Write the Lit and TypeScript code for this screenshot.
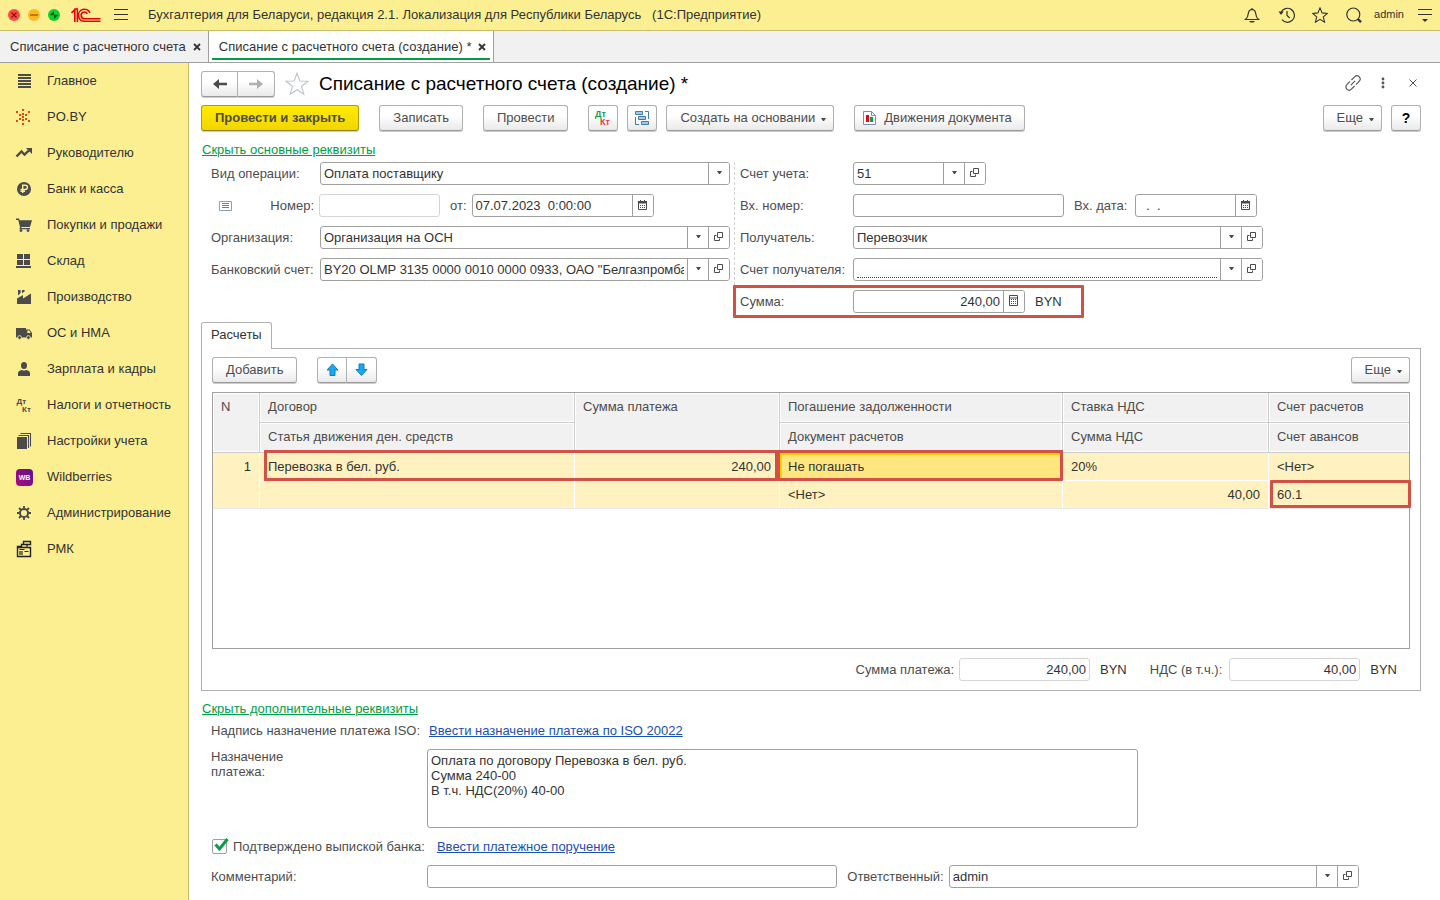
import { LitElement, html, css, nothing, TemplateResult } from "lit";
import { customElement, property } from "lit/decorators.js";
import { classMap } from "lit/directives/class-map.js";

const icons: Record<string, TemplateResult> = {
  main: html`<svg width="18" height="18" viewBox="0 0 18 18" fill="#4b4b4b"><path d="M3 2h13v2H3zM3 5h13v2H3zM3 8h13v2H3zM3 11h13v2H3zM3 14h13v2H3z"/></svg>`,
  poby: html`<svg width="18" height="18" viewBox="0 0 18 18" fill="#e8450a"><path d="M7 1h2v2H7zM7 15h2v2H7zM1 3h2v2H1zM13 3h2v2h-2zM1 12h2v2H1zM13 12h2v2h-2zM7 5h2v2H7zM7 8h2v2H7zM7 11h2v2H7zM4 6h2v2H4zM10 6h2v2h-2zM4 10h2v2H4zM10 10h2v2h-2z"/></svg>`,
  trend: html`<svg width="18" height="18" viewBox="0 0 18 18"><path d="M1.5 12.5L6.5 7.5L9.5 10.5L14.5 5.8" fill="none" stroke="#4b4b4b" stroke-width="2.4"/><path d="M11 4h6v6z" fill="#4b4b4b"/></svg>`,
  ruble: html`<svg width="18" height="18" viewBox="0 0 18 18"><circle cx="9" cy="9" r="7" fill="#4b4b4b"/><path d="M7.7 13V5.2h2.6a2.1 2.1 0 0 1 0 4.3H5.5M5.5 11.3H10" fill="none" stroke="#fbef92" stroke-width="1.4"/></svg>`,
  cart: html`<svg width="18" height="18" viewBox="0 0 18 18" fill="#4b4b4b"><path d="M1 2.5h3l.6 1.8H17l-2 6.7H6.5l-.4 1H15v1.2H4.4L5 11 3.2 4H1z"/><circle cx="6" cy="14.6" r="1.4"/><circle cx="13" cy="14.6" r="1.4"/></svg>`,
  stock: html`<svg width="18" height="18" viewBox="0 0 18 18" fill="#4b4b4b"><path d="M2 2h6v5H2zM9 2h6v5H9zM2 8h6v5H2zM9 8h6v5H9zM1 14h15v2H1z"/></svg>`,
  factory: html`<svg width="18" height="18" viewBox="0 0 18 18" fill="#4b4b4b"><path d="M2 16V10.5L8 7v3.5L16 5.5V16zM3 2h2.6v3L3 7.5zM7 2h2.6v1.5L7 5.2z"/></svg>`,
  truck: html`<svg width="18" height="18" viewBox="0 0 18 18"><path d="M1 4h10v1.5h3.6L17 9v4.5H1z" fill="#4b4b4b"/><path d="M12.3 6.6h1.9L15.7 9h-3.4z" fill="#fbef92"/><circle cx="4.6" cy="13.5" r="1.9" fill="#4b4b4b" stroke="#fbef92" stroke-width=".8"/><circle cx="13.4" cy="13.5" r="1.9" fill="#4b4b4b" stroke="#fbef92" stroke-width=".8"/></svg>`,
  person: html`<svg width="18" height="18" viewBox="0 0 18 18" fill="#4b4b4b"><ellipse cx="9" cy="5.4" rx="3" ry="3.5"/><path d="M3 16v-3c0-1.6 1.6-2.6 4-3l2 .8 2-.8c2.4.4 4 1.4 4 3v3z"/></svg>`,
  dtkt: html`<svg width="18" height="18" viewBox="0 0 18 18" fill="#4b4b4b" font-family="Liberation Sans, sans-serif" font-size="8" font-weight="bold"><text x="1.5" y="8">Дт</text><text x="7" y="15.5">Кт</text></svg>`,
  books: html`<svg width="18" height="18" viewBox="0 0 18 18"><path d="M2 5h10v12H2z" fill="#4b4b4b"/><path d="M3.5 3.5H13.5V16M5.5 1.5h10V14.5" fill="none" stroke="#4b4b4b" stroke-width="1.1"/></svg>`,
  wb: html`<svg width="18" height="18" viewBox="0 0 18 18"><defs><linearGradient id="wbg" x1="0" y1="1" x2="1" y2="0"><stop offset="0" stop-color="#b0087e"/><stop offset="1" stop-color="#5a1390"/></linearGradient></defs><rect x="1" y="1" width="17" height="17" rx="4" fill="url(#wbg)"/><text x="9.5" y="12" text-anchor="middle" font-family="Liberation Sans, sans-serif" font-size="7" font-weight="bold" fill="#fff">WB</text></svg>`,
  gear: html`<svg width="18" height="18" viewBox="0 0 18 18"><circle cx="9" cy="9" r="4.1" fill="none" stroke="#4b4b4b" stroke-width="2"/><path d="M9 2v3M9 13v3M2 9h3M13 9h3M4 4l2 2M12 12l2 2M4 14l2-2M12 6l2-2" stroke="#4b4b4b" stroke-width="1.8"/></svg>`,
  pos: html`<svg width="18" height="18" viewBox="0 0 18 18"><path d="M8.5 1.5h7v3h-7zM12 4.5v2M2.5 9V6.5h4V4.5h2M2.5 7.5h13v9h-13z" fill="none" stroke="#222" stroke-width="1.4"/><path d="M4.5 9.5h5M5 11v4M7 11v4M9.5 11.5h4" stroke="#222" stroke-width="1.2"/></svg>`,

  close: html`<svg width="12" height="12" viewBox="0 0 12 12"><circle cx="6" cy="6" r="6" fill="#fc4a44"/><path d="M3.5 3.5l5 5M8.5 3.5l-5 5" stroke="#8c1410" stroke-width="1.2"/></svg>`,
  min: html`<svg width="12" height="12" viewBox="0 0 12 12"><circle cx="6" cy="6" r="6" fill="#fdb823"/><path d="M2 6h8" stroke="#b56a00" stroke-width="1.6"/></svg>`,
  max: html`<svg width="12" height="12" viewBox="0 0 12 12"><circle cx="6" cy="6" r="6" fill="#0fd02e"/><path d="M1.5 6.2L6 2v4.2zM10.5 5.8L6 10V5.8z" fill="#0a5c17"/></svg>`,
  logo: html`<svg width="30" height="15" viewBox="0 0 30 15" fill="none" stroke="#e3000f" stroke-width="1.6"><path d="M.5 5L3.8 1.7V14M3.2 1H6.4V14"/><path d="M18.9 4.8A6 6 0 1 0 13.5 13.3H29.5"/><path d="M16.3 5.8A3.3 3.3 0 1 0 13.5 10.7H29.5"/></svg>`,
  burger: html`<svg width="14" height="12" viewBox="0 0 14 12"><path d="M0 .5h14M0 5.5h14M0 10.5h14" stroke="#333" stroke-width="1"/></svg>`,
  bell: html`<svg width="16" height="16" viewBox="0 0 16 16"><path d="M1.5 12.5C3.5 11 4 9.5 4.3 6.5C4.6 4 5.5 2.7 8 2.4C10.5 2.7 11.4 4 11.7 6.5C12 9.5 12.5 11 14.5 12.5zM8 2.4V1" fill="none" stroke="#333" stroke-width="1.2"/><path d="M5 14h6l-1.500 1.600h-3z" fill="#333"/></svg>`,
  history: html`<svg width="17" height="16" viewBox="0 0 17 16"><path d="M3 5.5A7 7 0 1 1 4 12.7" fill="none" stroke="#333" stroke-width="1.2"/><path d="M.5 4.5h5.2L3 8z" fill="#333"/><path d="M9 4v4.5l2.8 2.5" fill="none" stroke="#333" stroke-width="1.2"/></svg>`,
  star: html`<svg width="16" height="16" viewBox="0 0 16 16"><path d="M8 .9l2.1 5 5.2.5-4 3.5 1.3 5.3L8 12.4l-4.6 2.8 1.3-5.3-4-3.5 5.2-.5z" fill="none" stroke="#333" stroke-width="1.1"/></svg>`,
  search: html`<svg width="16" height="16" viewBox="0 0 16 16"><circle cx="7.3" cy="7.5" r="6.5" fill="none" stroke="#333" stroke-width="1.2"/><path d="M11.8 12l3.2 3.2" stroke="#333" stroke-width="2.4"/></svg>`,
  service: html`<svg width="14" height="14" viewBox="0 0 14 14"><path d="M0 1.5h14M0 6.5h14" stroke="#333" stroke-width="1"/><path d="M4 11h6L7 14z" fill="#333"/></svg>`,
  cross: html`<svg width="8" height="8" viewBox="0 0 8 8"><path d="M1 1l6 6M7 1L1 7" stroke="#333" stroke-width="1.8"/></svg>`,
  thinCross: html`<svg width="8" height="8" viewBox="0 0 8 8"><path d="M.5.5l7 7M7.5.5l-7 7" stroke="#555" stroke-width="1"/></svg>`,
  dots: html`<svg width="4" height="12" viewBox="0 0 4 12" fill="#555"><circle cx="2" cy="2" r="1.4"/><circle cx="2" cy="6" r="1.4"/><circle cx="2" cy="10" r="1.4"/></svg>`,
  link: html`<svg width="16" height="16" viewBox="0 0 16 16" fill="none" stroke="#555" stroke-width="1.2"><g transform="rotate(-45 8 8)"><path d="M7 4.8H2.5a3.2 3.2 0 0 0 0 6.4H7M9 4.8h4.5a3.2 3.2 0 0 1 0 6.4H9M5 8h6"/></g></svg>`,
  back: html`<svg width="14" height="12" viewBox="0 0 14 12"><path d="M0 6l6-5v3.7h8v2.6H6V11z" fill="#4b4b4b"/></svg>`,
  forward: html`<svg width="14" height="12" viewBox="0 0 14 12"><path d="M14 6L8 1v3.7H0v2.6h8V11z" fill="#b0b0b0"/></svg>`,
  favorite: html`<svg width="24" height="24" viewBox="0 0 24 24"><path d="M12 1.3l2.9 7.7 8 .3-6.3 5 2.2 7.9-6.800-4.500-6.800 4.500 2.200-7.900-6.300-5 8-.3z" fill="none" stroke="#bcc4cc" stroke-width="1.1"/></svg>`,
  dtktColor: html`<svg width="18" height="18" viewBox="0 0 18 18" font-family="Liberation Sans, sans-serif" font-size="9" font-weight="bold"><text x="1" y="8" fill="#139a4b">Дт</text><text x="6" y="16" fill="#ee3338">Кт</text></svg>`,
  tree: html`<svg width="16" height="16" viewBox="0 0 16 16"><g fill="#a9c8e2" stroke="#3f7cac" stroke-width="1"><path d="M1.5 1.5h7v3h-7zM4.5 6.5h7v3h-7zM7.5 11.5h7v3h-7z"/></g><path d="M11 1.5h3.5V9M1.5 7v7.5H5" fill="none" stroke="#3f7cac" stroke-width="1"/></svg>`,
  report: html`<svg width="13" height="14" viewBox="0 0 13 14"><path d="M.5.5h8l4 4v9H.5z" fill="#fff" stroke="#7b8fa6"/><path d="M8.5.5v4h4" fill="none" stroke="#7b8fa6"/><path d="M3 4h3v7H3z" fill="#e30613"/><path d="M7 6h3v5H7z" fill="#139a4b"/></svg>`,
  arrow: html`<svg width="5" height="3" viewBox="0 0 5 3"><path d="M0 0h5L3 3H2z" fill="#4b4b4b"/></svg>`,
  open: html`<svg width="10" height="10" viewBox="0 0 10 10" fill="none" stroke="#4b4b4b" stroke-width="1"><path d="M3.5.5h5v5h-5zM2.5 3.5h-2v5h5v-2"/></svg>`,
  calendar: html`<svg width="10" height="10" viewBox="0 0 10 10"><path d="M.5 1.5h8v8h-8z" fill="none" stroke="#4b4b4b"/><path d="M0 1h9v2.500H0zM2 0h1v1H2zM6 0h1v1H6z" fill="#4b4b4b"/><path d="M2 5.5h5.5M2 7.5h5.5" stroke="#4b4b4b" stroke-dasharray="1 1"/></svg>`,
  calc: html`<svg width="10" height="11" viewBox="0 0 10 11"><path d="M.5.5h8v10h-8zM.5 3h8" fill="none" stroke="#4b4b4b"/><path d="M2 4.5h5.5M2 6.5h5.5M2 8.5h5.5" stroke="#4b4b4b" stroke-dasharray="1 1"/></svg>`,
  list: html`<svg width="13" height="10" viewBox="0 0 13 10"><path d="M.5.5h12v9H.5z" fill="#fff" stroke="#8ba0b8"/><path d="M3 2.5h7M3 4.5h7M3 6.5h7" stroke="#6d7f94" stroke-width="1"/></svg>`,
  up: html`<svg width="13" height="14" viewBox="0 0 13 14"><path d="M6.5 1l5.5 6H9v5.5H4V7H1z" fill="#14aaf5" stroke="#1c79b0" stroke-width="1"/></svg>`,
  down: html`<svg width="13" height="14" viewBox="0 0 13 14"><path d="M6.5 12.5l5.5-6H9V1H4v5.5H1z" fill="#14aaf5" stroke="#1c79b0" stroke-width="1"/></svg>`,
  check: html`<svg width="17" height="16" viewBox="0 0 17 16"><path d="M3.5 6.5l4 4.5L15.5 1" fill="none" stroke="#0a9c46" stroke-width="3"/></svg>`,
};

const toolTitles: Record<string, string> = { arrow: "Выбрать", open: "Открыть", calendar: "Календарь", calc: "Калькулятор" };

/** Text box with the small command buttons that sit inside its frame. */
@customElement("entry-field")
class EntryField extends LitElement {
  @property() label = "";
  @property() value = "";
  @property() tools = "";
  @property({ type: Boolean }) select = false;
  @property({ type: Boolean, reflect: true }) muted = false;
  @property({ type: Boolean }) required = false;
  @property({ type: Boolean }) numeric = false;

  static styles = css`
    :host { display: block; min-width: 0; }
    .frame {
      display: flex; box-sizing: border-box; height: 23px; width: 100%;
      border: 1px solid #a0a0a0; border-radius: 3px; background: #fff; overflow: hidden;
    }
    :host([muted]) .frame { border-color: #d5d5d5; }
    .slot { flex: 1; min-width: 0; display: flex; padding: 0 3px; }
    .text {
      flex: 1; min-width: 0; width: 100%; border: 0; outline: 0; padding: 0; margin: 0; background: none;
      font: 13px "Liberation Sans", Arial, sans-serif; color: #333; appearance: none;
    }
    .required { margin-bottom: 2px; border-bottom: 1px dotted #e00000; }
    .numeric { text-align: right; }
    .tool {
      box-sizing: border-box; width: 21px; flex: none; padding: 0 0 2px; border: 0; border-left: 1px solid #a0a0a0;
      background: #fff; display: flex; align-items: center; justify-content: center;
    }
    svg { display: block; }
  `;

  render() {
    const cls = classMap({ text: true, required: this.required, numeric: this.numeric });
    return html`<div class="frame">
      <div class="slot">
        ${this.select
          ? html`<select class=${cls} aria-label=${this.label}><option>${this.value}</option></select>`
          : html`<input class=${cls} aria-label=${this.label} .value=${this.value} ?readonly=${this.muted} />`}
      </div>
      ${this.tools
        ? this.tools.split(" ").map((t) => html`<button class="tool" aria-label=${toolTitles[t]}>${icons[t]}</button>`)
        : nothing}
    </div>`;
  }
}

const sections: [string, string][] = [
  ["main", "Главное"],
  ["poby", "PO.BY"],
  ["trend", "Руководителю"],
  ["ruble", "Банк и касса"],
  ["cart", "Покупки и продажи"],
  ["stock", "Склад"],
  ["factory", "Производство"],
  ["truck", "ОС и НМА"],
  ["person", "Зарплата и кадры"],
  ["dtkt", "Налоги и отчетность"],
  ["books", "Настройки учета"],
  ["wb", "Wildberries"],
  ["gear", "Администрирование"],
  ["pos", "РМК"],
];

@customElement("app-root")
class AppRoot extends LitElement {
  static styles = css`
    :host {
      display: flex; flex-direction: column; min-height: 100vh; box-sizing: border-box;
      font: 13px/15px "Liberation Sans", Arial, sans-serif; color: #4d4d4d; background: #fff;
    }
    * { box-sizing: border-box; }
    svg { display: block; flex: none; }
    button { font: inherit; color: inherit; margin: 0; }
    a { color: inherit; }
    .plain { border: 0; background: none; padding: 0; display: flex; align-items: center; justify-content: center; }

    .top { display: flex; align-items: center; height: 31px; padding: 0 7px 0 8px; background: #fbef92; border-bottom: 1px solid #c5bd6a; color: #333; }
    .lights { display: flex; gap: 8px; }
    .top .logo { margin-left: 11px; }
    .top .burger { margin-left: 13px; }
    .caption { margin-left: 20px; padding-bottom: 2px; white-space: pre; }
    .tray { margin-left: auto; display: flex; align-items: center; gap: 18px; }
    .tray .plain { width: 16px; }
    .user { font-size: 11px; margin: 0 -5px 0 -6px; padding-bottom: 2px; color: #333; text-decoration: none; }

    .tabs { display: flex; height: 32px; background: #f1f1f1; border-bottom: 1px solid #a0a0a0; color: #333; }
    .tab { display: flex; align-items: center; gap: 7px; padding: 0 7px 0 10px; border-right: 1px solid #a0a0a0; position: relative; }
    .tab.current { background: #fff; }
    .tab.current::after { content: ""; position: absolute; left: 3px; right: 3px; bottom: 2px; height: 2px; background: #009e47; }
    .tab a { text-decoration: none; }

    .body { flex: 1; display: flex; }
    .side { width: 189px; flex: none; background: #fbef92; border-right: 1px solid #c5bd6a; }
    .side a { display: flex; align-items: center; gap: 14px; height: 36px; padding-left: 15px; color: #333; text-decoration: none; }
    .side span { padding-bottom: 2px; }

    .main { flex: 1; min-width: 0; display: flex; flex-direction: column; padding: 8px 19px 12px 12px; }
    .head { display: flex; align-items: center; height: 26px; }
    .head h1 { margin: 0 0 0 10px; font-weight: normal; font-size: 19px; line-height: 22px; color: #000; }
    .head .fav { margin-left: 10px; }
    .head .right { margin-left: auto; display: flex; align-items: center; gap: 14px; padding-bottom: 2px; }
    .head .right .plain { width: 16px; }
    .pair { display: flex; }
    .btn {
      display: flex; align-items: center; justify-content: center; gap: 6px; height: 26px; padding: 0 13px 1px;
      border: 1px solid #b0b0b0; border-bottom-color: #9a9a9a; border-radius: 3px;
      background: linear-gradient(#fff 40%, #e9e9e9); box-shadow: 0 1px 0 #ccc; white-space: nowrap;
    }
    .btn.more { padding-right: 7px; }
    .btn.more svg { margin-top: 4px; }
    .btn.icon { width: 30px; padding: 0; }
    .btn.report { padding-left: 8px; padding-right: 12px; gap: 8px; }
    .btn.help { width: 30px; padding: 0; font-weight: bold; font-size: 14px; color: #000; }
    .btn.primary { background: linear-gradient(#ffec00, #f2d500); border-color: #b39c00; border-bottom-color: #958200; font-weight: bold; }
    .pair .btn { width: 37px; padding: 0; }
    .pair .btn:first-child { border-radius: 3px 0 0 3px; }
    .pair .btn:last-child { border-left: 0; border-radius: 0 3px 3px 0; }
    .pair.small .btn { width: 30px; }
    .commands { display: flex; gap: 20px; margin-top: 8px; }
    .commands .group { display: flex; gap: 9px; }
    .commands .end { margin-left: auto; }
    .toggle { align-self: flex-start; margin: 11px 0 0 1px; color: #009e47; }
    .panel + .toggle { margin-top: 10px; }

    .form { display: flex; margin-top: 5px; padding: 0 158px 0 10px; }
    .col { display: flex; flex-direction: column; gap: 9px; min-width: 0; }
    .col.one { flex: 1 1 109px; }
    .col.two { flex: 1 1 113px; }
    .split { width: 10px; flex: none; padding-left: 4px; height: 123px; }
    .split::before { content: ""; display: block; height: 100%; border-left: 1px dashed #d0d0d0; }
    .row { display: flex; align-items: center; height: 23px; position: relative; }
    .row label { white-space: nowrap; }
    .one .row > label:first-child { width: 109px; flex: none; }
    .one .row > .lead { width: 108px; flex: none; }
    .two .row > label:first-child { width: 113px; flex: none; }
    .lead { display: flex; align-items: center; justify-content: space-between; padding: 0 5px 0 8px; }
    .grow { flex: 1; }
    .w121 { width: 121px; } .w131 { width: 131px; } .w133 { width: 133px; } .w172 { width: 172px; }
    .w182 { width: 182px; } .w211 { width: 211px; } .w122 { width: 122px; }
    .next { margin: 0 5px 0 10px; }
    .next.wide { min-width: 56px; }
    .unit { margin-left: 10px; color: #333; }
    .marked::after { content: ""; position: absolute; border: 3px solid #d25045; border-radius: 1px; pointer-events: none; z-index: 1; }
    .row.marked { align-self: flex-start; }
    .row.marked::after { inset: -5px -22px -5px -7px; }

    .strip { display: flex; margin-top: 9px; margin-bottom: -1px; }
    .page { height: 27px; padding: 0 9px 3px; border: 1px solid #b0b0b0; border-bottom: 0; border-radius: 3px 3px 0 0; background: #fff; color: #333; position: relative; z-index: 1; }
    .panel { flex: 1; display: flex; flex-direction: column; border: 1px solid #b0b0b0; padding: 8px 10px 9px; }
    .bar { display: flex; gap: 20px; }
    .bar .end { margin-left: auto; }
    .sheet { flex: 1; min-height: 120px; margin-top: 9px; border: 1px solid #a0a0a0; }
    table { width: 100%; table-layout: fixed; border-collapse: separate; border-spacing: 0; }
    th, td { text-align: left; font-weight: normal; vertical-align: top; padding: 6px 8px 0; white-space: nowrap; position: relative; }
    th { height: 30px; background: #f1f1f1; border-right: 1px solid #ccc; border-bottom: 1px solid #ccc; box-shadow: inset 0 0 0 1px #fff; }
    th.edge { border-right: 0; }
    td { height: 28px; background: #fff2c0; color: #333; border-right: 1px solid #fff; border-bottom: 1px solid #fff; }
    td.edge { border-right: 0; }
    tr:last-child td, td[rowspan] { border-bottom-color: #e8e8e8; }
    .num { text-align: right; padding-right: 8px; }
    td.active { background: #ffe680; box-shadow: inset 0 0 0 2px #ffcc00; }
    .from::after { inset: -3px -1px -1px 4px; border-right: 0; }
    .to::after { inset: -3px 1px -1px -1px; border-left: 0; }
    .whole::after { inset: -3px -1px -1px -3px; }
    .last::after { inset: -1px -2px 0 1px; }
    .totals { display: flex; justify-content: flex-end; align-items: center; margin-top: 9px; padding-right: 13px; }
    .totals label { margin-right: 5px; }
    .totals .second { margin: 0 7px 0 23px; }

    .blue { color: #1a4fb5; }
    .line { display: flex; align-items: center; }
    .iso { margin: 7px 0 0 10px; gap: 9px; }
    .purpose { display: flex; margin: 11px 0 0 10px; }
    .purpose label { width: 216px; padding-right: 120px; flex: none; }
    textarea {
      flex: 0 1 711px; min-width: 0; height: 79px; resize: none; border: 1px solid #a0a0a0; border-radius: 3px; outline: 0;
      padding: 3px; font: 13px/15px "Liberation Sans", Arial, sans-serif; color: #333;
    }
    .confirm { margin: 11px 0 0 11px; height: 15px; }
    .tick { position: relative; display: flex; margin-right: 6px; }
    .tick input { appearance: none; width: 15px; height: 15px; margin: 0; border: 1px solid #a0a0a0; border-radius: 2px; background: #fff; }
    .tick svg { position: absolute; left: 0; top: -1px; pointer-events: none; }
    .confirm a { margin-left: 12px; }
    .comment { margin: 11px 0 0 10px; padding-right: 62px; }
    .comment > label:first-child { width: 216px; flex: none; }
  `;

  private more() {
    return html`<button class="btn more end">Еще ${icons.arrow}</button>`;
  }

  render() {
    return html`
      <header class="top">
        <div class="lights">
          <button class="plain" aria-label="Закрыть">${icons.close}</button>
          <button class="plain" aria-label="Свернуть">${icons.min}</button>
          <button class="plain" aria-label="Развернуть">${icons.max}</button>
        </div>
        <span class="logo">${icons.logo}</span>
        <button class="plain burger" aria-label="Меню">${icons.burger}</button>
        <span class="caption">Бухгалтерия для Беларуси, редакция 2.1. Локализация для Республики Беларусь   (1С:Предприятие)</span>
        <div class="tray">
          <button class="plain" aria-label="Уведомления">${icons.bell}</button>
          <button class="plain" aria-label="История">${icons.history}</button>
          <button class="plain" aria-label="Избранное">${icons.star}</button>
          <button class="plain" aria-label="Поиск">${icons.search}</button>
          <a class="user" href="#">admin</a>
          <button class="plain" aria-label="Сервис">${icons.service}</button>
        </div>
      </header>
      <nav class="tabs">
        <div class="tab"><a href="#">Списание с расчетного счета</a><button class="plain" aria-label="Закрыть">${icons.cross}</button></div>
        <div class="tab current"><a href="#">Списание с расчетного счета (создание) *</a><button class="plain" aria-label="Закрыть">${icons.cross}</button></div>
      </nav>
      <div class="body">
        <nav class="side">${sections.map(([i, t]) => html`<a href="#">${icons[i]}<span>${t}</span></a>`)}</nav>
        <main class="main">
          <div class="head">
            <div class="pair">
              <button class="btn" aria-label="Назад">${icons.back}</button>
              <button class="btn" aria-label="Вперед">${icons.forward}</button>
            </div>
            <button class="plain fav" aria-label="В избранное">${icons.favorite}</button>
            <h1>Списание с расчетного счета (создание) *</h1>
            <div class="right">
              <button class="plain" aria-label="Ссылка">${icons.link}</button>
              <button class="plain" aria-label="Действия">${icons.dots}</button>
              <button class="plain" aria-label="Закрыть">${icons.thinCross}</button>
            </div>
          </div>
          <div class="commands">
            <button class="btn primary">Провести и закрыть</button>
            <button class="btn">Записать</button>
            <button class="btn">Провести</button>
            <div class="group">
              <button class="btn icon" aria-label="Дт Кт">${icons.dtktColor}</button>
              <button class="btn icon" aria-label="Структура">${icons.tree}</button>
              <button class="btn more">Создать на основании ${icons.arrow}</button>
            </div>
            <button class="btn report">${icons.report} Движения документа</button>
            <div class="group end">${this.more()}<button class="btn help">?</button></div>
          </div>
          <a class="toggle" href="#">Скрыть основные реквизиты</a>

          <div class="form">
            <div class="col one">
              <div class="row"><label>Вид операции:</label><entry-field class="grow" select label="Вид операции" value="Оплата поставщику" tools="arrow"></entry-field></div>
              <div class="row">
                <div class="lead">${icons.list}<label>Номер:</label></div>
                <entry-field class="w121" muted label="Номер"></entry-field>
                <label class="next">от:</label>
                <entry-field class="w182" label="от" value="07.07.2023  0:00:00" tools="calendar"></entry-field>
              </div>
              <div class="row"><label>Организация:</label><entry-field class="grow" label="Организация" value="Организация на ОСН" tools="arrow open"></entry-field></div>
              <div class="row"><label>Банковский счет:</label><entry-field class="grow" label="Банковский счет" value='BY20 OLMP 3135 0000 0010 0000 0933, ОАО "Белгазпромбанк"' tools="arrow open"></entry-field></div>
            </div>
            <div class="split"></div>
            <div class="col two">
              <div class="row"><label>Счет учета:</label><entry-field class="w133" label="Счет учета" value="51" tools="arrow open"></entry-field></div>
              <div class="row">
                <label>Вх. номер:</label><entry-field class="w211" label="Вх. номер"></entry-field>
                <label class="next wide">Вх. дата:</label><entry-field class="w122" label="Вх. дата" value="  .  ." tools="calendar"></entry-field>
              </div>
              <div class="row"><label>Получатель:</label><entry-field class="grow" label="Получатель" value="Перевозчик" tools="arrow open"></entry-field></div>
              <div class="row"><label>Счет получателя:</label><entry-field class="grow" required label="Счет получателя" tools="arrow open"></entry-field></div>
              <div class="row marked"><label>Сумма:</label><entry-field class="w172" numeric label="Сумма" value="240,00" tools="calc"></entry-field><span class="unit">BYN</span></div>
            </div>
          </div>

          <div class="strip"><button class="page">Расчеты</button></div>
          <section class="panel">
            <div class="bar">
              <button class="btn">Добавить</button>
              <div class="pair small">
                <button class="btn" aria-label="Вверх">${icons.up}</button>
                <button class="btn" aria-label="Вниз">${icons.down}</button>
              </div>
              ${this.more()}
            </div>
            <div class="sheet">
              <table>
                <colgroup>${[47, 315, 205, 283, 206, 140].map((w) => html`<col style="width:${w}px" />`)}</colgroup>
                <thead>
                  <tr><th rowspan="2">N</th><th>Договор</th><th rowspan="2">Сумма платежа</th><th>Погашение задолженности</th><th>Ставка НДС</th><th class="edge">Счет расчетов</th></tr>
                  <tr><th>Статья движения ден. средств</th><th>Документ расчетов</th><th>Сумма НДС</th><th class="edge">Счет авансов</th></tr>
                </thead>
                <tbody>
                  <tr>
                    <td class="num" rowspan="2">1</td><td class="marked from">Перевозка в бел. руб.</td><td class="num marked to">240,00</td>
                    <td class="active marked whole">Не погашать</td><td>20%</td><td class="edge">&lt;Нет&gt;</td>
                  </tr>
                  <tr><td></td><td></td><td>&lt;Нет&gt;</td><td class="num">40,00</td><td class="edge marked last">60.1</td></tr>
                </tbody>
              </table>
            </div>
            <div class="totals">
              <label>Сумма платежа:</label><entry-field class="w131" muted numeric label="Сумма платежа" value="240,00"></entry-field><span class="unit">BYN</span>
              <label class="second">НДС (в т.ч.):</label><entry-field class="w131" muted numeric label="НДС (в т.ч.)" value="40,00"></entry-field><span class="unit">BYN</span>
            </div>
          </section>

          <a class="toggle" href="#">Скрыть дополнительные реквизиты</a>
          <div class="line iso"><span>Надпись назначение платежа ISO:</span><a class="blue" href="#">Ввести назначение платежа по ISO 20022</a></div>
          <div class="purpose">
            <label for="purpose">Назначение платежа:</label>
            <textarea id="purpose" .value=${"Оплата по договору Перевозка в бел. руб.\nСумма 240-00\nВ т.ч. НДС(20%) 40-00"}></textarea>
          </div>
          <div class="line confirm">
            <span class="tick"><input id="confirmed" type="checkbox" checked />${icons.check}</span>
            <label for="confirmed">Подтверждено выпиской банка:</label>
            <a class="blue" href="#">Ввести платежное поручение</a>
          </div>
          <div class="line comment">
            <label>Комментарий:</label><entry-field class="grow" label="Комментарий"></entry-field>
            <label class="next">Ответственный:</label><entry-field class="grow" label="Ответственный" value="admin" tools="arrow open"></entry-field>
          </div>
        </main>
      </div>
    `;
  }
}
